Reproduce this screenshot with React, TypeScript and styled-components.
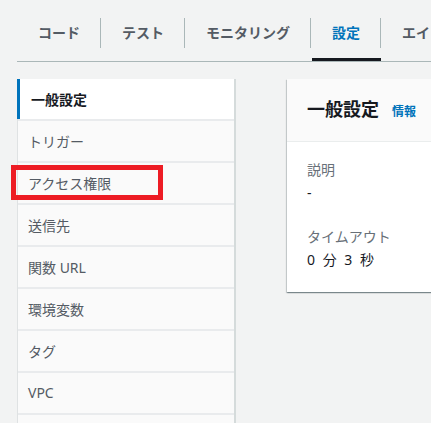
import React from "react";
import styled, { createGlobalStyle } from "styled-components";

const Global = createGlobalStyle`
  html, body { margin: 0; padding: 0; }
  body {
    background: #f2f3f3;
    font-family: "Noto Sans", "Noto Sans CJK JP", sans-serif;
    overflow: hidden;
    width: 431px;
    height: 423px;
  }
  * { box-sizing: border-box; }
`;

const Page = styled.div`
  padding-left: 17px;
  width: 431px;
  height: 423px;
  overflow: hidden;
`;

const TabBar = styled.div`
  display: flex;
  height: 62px;
  border-bottom: 1px solid #aab7b8;
  white-space: nowrap;
`;

const Tab = styled.div<{ $active?: boolean }>`
  position: relative;
  padding: 18px 21px 0 21px;
  font-size: 14px;
  line-height: 30px;
  font-weight: ${(p) => (p.$active ? 700 : 600)};
  color: ${(p) => (p.$active ? "#0073bb" : "#545b64")};
  flex-shrink: 0;
  &::after {
    content: "";
    position: absolute;
    right: 0;
    top: 18px;
    height: 30px;
    width: 1px;
    background: #aab7b8;
  }
  &::before {
    content: "";
    display: ${(p) => (p.$active ? "block" : "none")};
    position: absolute;
    left: 1px;
    right: 0;
    bottom: 0;
    height: 3px;
    background: #16191f;
  }
`;

const Content = styled.div`
  display: flex;
  align-items: flex-start;
  gap: 51px;
  margin-top: 17px;
`;

const SideNav = styled.div`
  position: relative;
  width: 219px;
  flex-shrink: 0;
  border-left: 1px solid #dfe2e3;
  border-right: 2px solid #d5dbdb;
  background: #e9ebed;
  display: flex;
  flex-direction: column;
  gap: 2px;
`;

const NavItem = styled.div<{ $active?: boolean }>`
  position: relative;
  height: 40px;
  display: flex;
  align-items: center;
  padding-left: ${(p) => (p.$active ? "11px" : "10px")};
  padding-bottom: 1px;
  font-size: 14px;
  background: ${(p) => (p.$active ? "#ffffff" : "#fafafa")};
  color: ${(p) => (p.$active ? "#16191f" : "#545b64")};
  font-weight: ${(p) => (p.$active ? 700 : 400)};
  border-left: ${(p) => (p.$active ? "3px solid #0073bb" : "none")};
  margin-left: ${(p) => (p.$active ? "-1px" : "0")};
`;

const Highlight = styled.div`
  position: absolute;
  left: -7px;
  top: 86px;
  width: 152px;
  height: 35px;
  border: 5px solid #ed1c24;
  pointer-events: none;
`;

const Card = styled.div`
  width: 300px;
  flex-shrink: 0;
  background: #ffffff;
  box-shadow: 0 1px 1px 0 rgba(0, 28, 36, 0.3),
    1px 1px 1px 0 rgba(0, 28, 36, 0.15),
    -1px 1px 1px 0 rgba(0, 28, 36, 0.15);
`;

const CardHeader = styled.div`
  height: 63px;
  background: #fafafa;
  border-bottom: 1px solid #eaeded;
  display: flex;
  align-items: baseline;
  padding: 18px 20px 0;
`;

const Title = styled.h2`
  margin: 0;
  font-size: 18px;
  line-height: 24px;
  font-weight: 700;
  color: #16191f;
`;

const InfoLink = styled.span`
  margin-left: 13px;
  font-size: 12px;
  font-weight: 700;
  color: #0073bb;
`;

const CardBody = styled.div`
  padding: 17px 20px 21px;
  display: flex;
  flex-direction: column;
  gap: 22px;
`;

const Field = styled.div`
  display: flex;
  flex-direction: column;
  gap: 1px;
`;

const Label = styled.div`
  font-size: 14px;
  line-height: 22px;
  color: #687078;
`;

const Value = styled.div`
  font-size: 14px;
  line-height: 22px;
  color: #16191f;
  word-spacing: 4px;
`;

const tabs = ["コード", "テスト", "モニタリング", "設定", "エイリアス"];
const navItems = [
  "一般設定",
  "トリガー",
  "アクセス権限",
  "送信先",
  "関数 URL",
  "環境変数",
  "タグ",
  "VPC",
  "",
];

export default function App() {
  return (
    <>
      <Global />
      <Page>
        <TabBar>
          {tabs.map((t) => (
            <Tab key={t} $active={t === "設定"}>
              {t}
            </Tab>
          ))}
        </TabBar>
        <Content>
          <SideNav>
            {navItems.map((n, i) => (
              <NavItem key={i} $active={i === 0}>
                {n}
              </NavItem>
            ))}
            <Highlight />
          </SideNav>
          <Card>
            <CardHeader>
              <Title>一般設定</Title>
              <InfoLink>情報</InfoLink>
            </CardHeader>
            <CardBody>
              <Field>
                <Label>説明</Label>
                <Value>-</Value>
              </Field>
              <Field>
                <Label>タイムアウト</Label>
                <Value>0 分 3 秒</Value>
              </Field>
            </CardBody>
          </Card>
        </Content>
      </Page>
    </>
  );
}
